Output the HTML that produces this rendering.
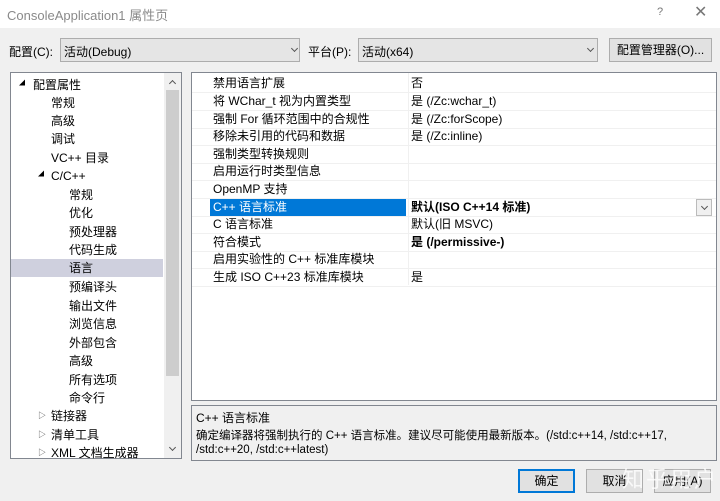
<!DOCTYPE html>
<html><head><meta charset="utf-8"><style>
*{margin:0;padding:0;box-sizing:border-box}
body{width:720px;height:501px;background:#f0f0f0;font-family:"Liberation Sans","Noto Sans CJK SC",sans-serif;font-size:12px;color:#000;position:relative;overflow:hidden}
.a{position:absolute;white-space:nowrap}
.title{left:0;top:0;width:720px;height:28px;background:#fff}
.combo{border:1px solid #adadad;background:#e5e5e5;height:24px}
.tree{left:10px;top:72px;width:172px;height:387px;background:#fff;border:1px solid #828790}
.ti{position:absolute;height:18px;line-height:18px}
.grid{left:191px;top:72px;width:526px;height:329px;background:#fff;border:1px solid #828790}
.row{position:absolute;left:0;width:524px;height:18px;border-bottom:1px solid #f0f0f0;line-height:17px}
.n{position:absolute;left:21px}
.v{position:absolute;left:219px}
.btn{border:1px solid #adadad;background:#e1e1e1;height:24px;text-align:center;line-height:22px}
.chev{position:absolute;width:5px;height:5px;border-right:1px solid #555;border-bottom:1px solid #555;transform:rotate(45deg)}
</style></head><body>
<div class="a title"></div>
<div class="a" style="left:7px;top:5px;font-size:13px;color:#8a8a8a">ConsoleApplication1 属性页</div>
<div class="a" style="left:657px;top:6px;color:#777;font-size:11px">?</div>
<div class="a" style="left:694px;top:2px;font-size:16px;color:#777">✕</div>

<div class="a" style="left:9px;top:43px">配置(C):</div>
<div class="a combo" style="left:60px;top:38px;width:240px"><span class="a" style="left:3px;top:4px">活动(Debug)</span><span class="chev" style="left:231px;top:7px"></span></div>
<div class="a" style="left:308px;top:43px">平台(P):</div>
<div class="a combo" style="left:358px;top:38px;width:240px"><span class="a" style="left:3px;top:4px">活动(x64)</span><span class="chev" style="left:229px;top:7px"></span></div>
<div class="a btn" style="left:609px;top:38px;width:103px">配置管理器(O)...</div>

<div class="a tree">
<div class="a" style="left:153px;top:0;width:17px;height:385px;background:#f0f0f0"></div>
<div class="a" style="left:155px;top:17px;width:13px;height:286px;background:#cdcdcd"></div>
<div class="chev" style="left:159px;top:8px;transform:rotate(225deg)"></div>
<div class="chev" style="left:159px;top:372px"></div>
<div class="ti" style="left:0;top:186px;width:152px;background:#cfd0de"></div>
<div class="ti" style="left:8px;top:2px;font-size:6px">◢</div><div class="ti" style="left:22px;top:3px">配置属性</div>
<div class="ti" style="left:40px;top:21px">常规</div>
<div class="ti" style="left:40px;top:39px">高级</div>
<div class="ti" style="left:40px;top:57px">调试</div>
<div class="ti" style="left:40px;top:76px">VC++ 目录</div>
<div class="ti" style="left:27px;top:93px;font-size:6px">◢</div><div class="ti" style="left:40px;top:94px">C/C++</div>
<div class="ti" style="left:58px;top:113px">常规</div>
<div class="ti" style="left:58px;top:131px">优化</div>
<div class="ti" style="left:58px;top:150px">预处理器</div>
<div class="ti" style="left:58px;top:168px">代码生成</div>
<div class="ti" style="left:58px;top:186px">语言</div>
<div class="ti" style="left:58px;top:205px">预编译头</div>
<div class="ti" style="left:58px;top:224px">输出文件</div>
<div class="ti" style="left:58px;top:242px">浏览信息</div>
<div class="ti" style="left:58px;top:261px">外部包含</div>
<div class="ti" style="left:58px;top:279px">高级</div>
<div class="ti" style="left:58px;top:298px">所有选项</div>
<div class="ti" style="left:58px;top:316px">命令行</div>
<div class="ti" style="left:27px;top:334px;font-size:8px;color:#444">▷</div><div class="ti" style="left:40px;top:334px">链接器</div>
<div class="ti" style="left:27px;top:353px;font-size:8px;color:#444">▷</div><div class="ti" style="left:40px;top:353px">清单工具</div>
<div class="ti" style="left:27px;top:371px;font-size:8px;color:#444">▷</div><div class="ti" style="left:40px;top:371px">XML 文档生成器</div>
</div>

<div class="a grid">
<div class="a" style="left:216px;top:0;width:1px;height:212px;background:#f0f0f0"></div>
<div class="row" style="top:2px"><span class="n">禁用语言扩展</span><span class="v">否</span></div>
<div class="row" style="top:20px"><span class="n">将 WChar_t 视为内置类型</span><span class="v">是 (/Zc:wchar_t)</span></div>
<div class="row" style="top:38px"><span class="n">强制 For 循环范围中的合规性</span><span class="v">是 (/Zc:forScope)</span></div>
<div class="row" style="top:55px"><span class="n">移除未引用的代码和数据</span><span class="v">是 (/Zc:inline)</span></div>
<div class="row" style="top:73px"><span class="n">强制类型转换规则</span></div>
<div class="row" style="top:90px"><span class="n">启用运行时类型信息</span></div>
<div class="row" style="top:108px"><span class="n">OpenMP 支持</span></div>
<div class="row" style="top:126px"><div class="a" style="left:18px;top:0;width:196px;height:17px;background:#0078d7"></div><span class="n" style="color:#fff">C++ 语言标准</span><span class="v" style="font-weight:bold">默认(ISO C++14 标准)</span><div class="a" style="left:504px;top:0;width:16px;height:17px;border:1px solid #bbb;background:#f0f0f0"><span class="chev" style="left:5px;top:4px"></span></div></div>
<div class="row" style="top:143px"><span class="n">C 语言标准</span><span class="v">默认(旧 MSVC)</span></div>
<div class="row" style="top:161px"><span class="n">符合模式</span><span class="v" style="font-weight:bold">是 (/permissive-)</span></div>
<div class="row" style="top:178px"><span class="n">启用实验性的 C++ 标准库模块</span></div>
<div class="row" style="top:196px"><span class="n">生成 ISO C++23 标准库模块</span><span class="v">是</span></div>
</div>

<div class="a" style="left:191px;top:405px;width:526px;height:56px;border:1px solid #828790;background:#f0f0f0"></div>
<div class="a" style="left:196px;top:409px">C++ 语言标准</div>
<div class="a" style="left:196px;top:427px;font-size:11.5px">确定编译器将强制执行的 C++ 语言标准。建议尽可能使用最新版本。(/std:c++14, /std:c++17,</div>
<div class="a" style="left:196px;top:444px;font-size:11.5px">/std:c++20, /std:c++latest)</div>

<div class="a btn" style="left:518px;top:469px;width:57px;border:2px solid #0078d7;line-height:20px">确定</div>
<div class="a btn" style="left:586px;top:469px;width:57px">取消</div>
<div class="a btn" style="left:654px;top:469px;width:57px">应用(A)</div>
<div class="a" style="left:622px;top:462px;font-size:22px;color:rgba(255,255,255,0.8);letter-spacing:2px">知乎用户</div>
</body></html>
